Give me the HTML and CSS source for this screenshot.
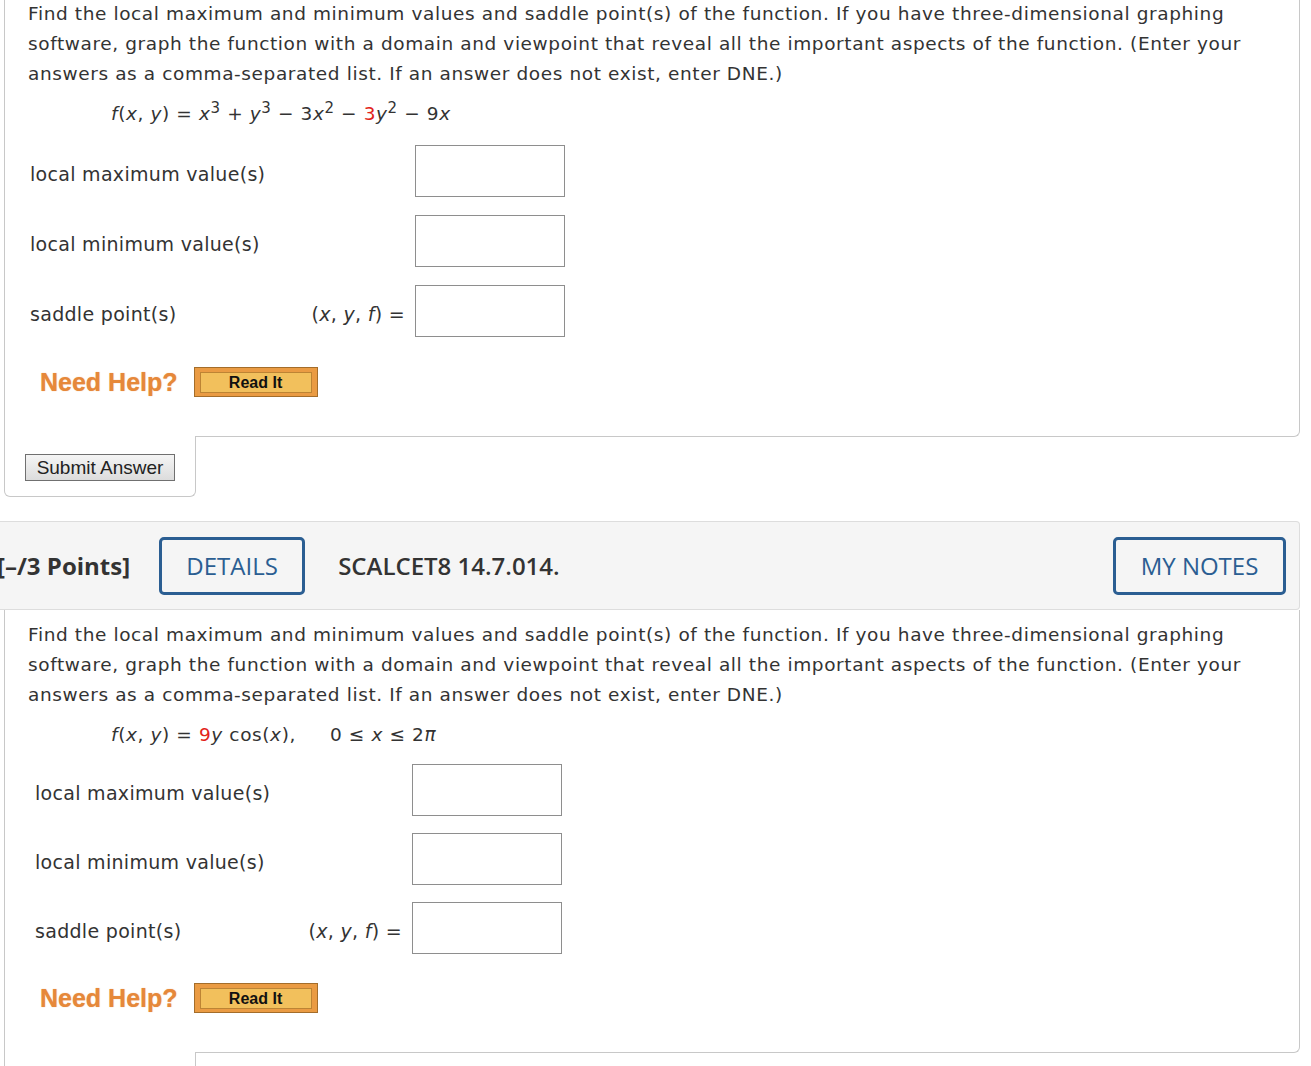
FILE: index.html
```html
<!DOCTYPE html>
<html lang="en">
<head>
  <meta charset="UTF-8">
  <meta name="viewport" content="width=device-width, initial-scale=1.0">
  <title>SCALCET8 14.7 - Local Maximum and Minimum</title>
  <link rel="stylesheet" href="styles.css">
</head>
<body>

  <!-- Question 13 (scrolled, only the lower part shows) -->
  <div class="question first">
    <div class="q-body">
      <p class="prompt">Find the local maximum and minimum values and saddle point(s) of the function. If you have three-dimensional graphing software, graph the function with a domain and viewpoint that reveal all the important aspects of the function. (Enter your answers as a comma-separated list. If an answer does not exist, enter DNE.)</p>
      <div class="formula">
        <i>f</i>(<i>x</i>, <i>y</i>) = <i>x</i><sup>3</sup> + <i>y</i><sup>3</sup> &minus; 3<i>x</i><sup>2</sup> &minus; <span class="red">3</span><i>y</i><sup>2</sup> &minus; 9<i>x</i>
      </div>
      <div class="answers">
        <span class="label">local maximum value(s)</span><span class="prefix"></span><span class="box"></span>
        <span class="label">local minimum value(s)</span><span class="prefix"></span><span class="box"></span>
        <span class="label">saddle point(s)</span><span class="prefix">(<i>x</i>, <i>y</i>, <i>f</i>) =</span><span class="box"></span>
      </div>
      <div class="help">
        <span class="need-help">Need Help?</span>
        <button class="read-it"><span>Read It</span></button>
      </div>
    </div>
    <div class="q-tab">
      <button class="submit">Submit Answer</button>
    </div>
  </div>

  <div class="q-header">
    <span class="points">[&ndash;/3 Points]</span>
    <button class="outline details">DETAILS</button>
    <span class="qid">SCALCET8 14.7.014.</span>
    <button class="outline notes">MY NOTES</button>
  </div>

  <div class="question second">
    <div class="q-body">
      <p class="prompt">Find the local maximum and minimum values and saddle point(s) of the function. If you have three-dimensional graphing software, graph the function with a domain and viewpoint that reveal all the important aspects of the function. (Enter your answers as a comma-separated list. If an answer does not exist, enter DNE.)</p>
      <div class="formula">
        <i>f</i>(<i>x</i>, <i>y</i>) = <span class="red">9</span><i>y</i> cos(<i>x</i>),<span class="range">0 &le; <i>x</i> &le; 2<i>&pi;</i></span>
      </div>
      <div class="answers">
        <span class="label">local maximum value(s)</span><span class="prefix"></span><span class="box"></span>
        <span class="label">local minimum value(s)</span><span class="prefix"></span><span class="box"></span>
        <span class="label">saddle point(s)</span><span class="prefix">(<i>x</i>, <i>y</i>, <i>f</i>) =</span><span class="box"></span>
      </div>
      <div class="help">
        <span class="need-help">Need Help?</span>
        <button class="read-it"><span>Read It</span></button>
      </div>
    </div>
    <div class="q-tab">
      <button class="submit">Submit Answer</button>
    </div>
  </div>

</body>
</html>
```

FILE: styles.css
```css
body {
  margin: 0;
  background: #fff;
  color: #333;
  font-family: "DejaVu Sans", Verdana, sans-serif;
}

.question { margin-left: 4px; width: 1296px; }
.question.first { margin-top: -11px; }

.q-body {
  border: 1px solid #c8c8c8;
  border-top: none;
  border-radius: 0 0 6px 0;
  padding: 10px 30px 39px 23px;
  letter-spacing: 0.6px;
}

.prompt { margin: 0; font-size: 18.5px; line-height: 30px; }

.formula {
  margin-top: 10px;
  padding-left: 83px;
  font-size: 18.5px;
  line-height: 30px;
}
.formula sup { font-size: 15px; line-height: 0; vertical-align: 7px; }
.formula .range { margin-left: 34px; }
.red { color: #e2231a; }

.answers {
  display: grid;
  grid-template-columns: 270px 115px 150px;
  row-gap: 18px;
  align-items: center;
  margin-top: 16px;
  padding-left: 2px;
  font-size: 19px;
  letter-spacing: 0.3px;
}
.second .answers {
  grid-template-columns: 265px 112px 150px;
  row-gap: 17px;
  margin-top: 14px;
  padding-left: 7px;
}
.label, .prefix { padding-top: 6px; }
.prefix { text-align: right; padding-right: 10px; }
.box {
  height: 52px;
  box-sizing: border-box;
  border: 1px solid #8e8e8e;
  background: #fff;
}

.help {
  display: flex;
  align-items: center;
  gap: 16px;
  margin-top: 30px;
  padding-left: 12px;
  letter-spacing: 0;
}
.second .help { margin-top: 29px; }
.need-help {
  font: bold 25px "Liberation Sans", Arial, sans-serif;
  color: #e6883a;
  text-shadow: 0 0 1px rgba(230, 136, 58, 0.7);
}
.read-it {
  width: 124px;
  height: 30px;
  box-sizing: border-box;
  padding: 4px 5px 3px;
  border: 1px solid #a46d2a;
  background: #ea9b43;
  cursor: pointer;
}
.read-it span {
  display: block;
  height: 100%;
  box-sizing: border-box;
  border: 1px solid #bd8434;
  background: #f2c05c;
  font: bold 16px/19px "Liberation Sans", Arial, sans-serif;
  color: #111;
}

.q-tab {
  position: relative;
  width: 192px;
  box-sizing: border-box;
  margin-top: -1px;
  padding: 18px 0 15px 20px;
  border: 1px solid #c8c8c8;
  border-top: none;
  border-radius: 0 0 6px 6px;
  background: #fff;
}
.submit {
  width: 150px;
  height: 27px;
  padding: 0;
  border: 1px solid #707070;
  background: linear-gradient(#f5f5f5, #dcdcdc);
  font: 19px "Liberation Sans", Arial, sans-serif;
  color: #222;
}

.q-header {
  display: flex;
  align-items: center;
  height: 87px;
  margin: 24px 11px 0 -20px;
  padding: 0 13px 0 17px;
  background: #f5f5f5;
  border: 1px solid #ddd;
  border-left: none;
  border-radius: 0 4px 4px 0;
  font-family: "Open Sans", sans-serif;
  font-size: 24px;
  color: #333;
}
.points { font-weight: 700; }
.qid { margin-left: 33px; font-weight: 600; }
.outline {
  height: 58px;
  padding: 0;
  border: 3px solid #2b5e92;
  border-radius: 5px;
  background: transparent;
  color: #2b5e92;
  font: 24px "Open Sans", sans-serif;
  cursor: pointer;
}
.details { width: 146px; margin-left: 29px; }
.notes { width: 173px; margin-left: auto; }
```
